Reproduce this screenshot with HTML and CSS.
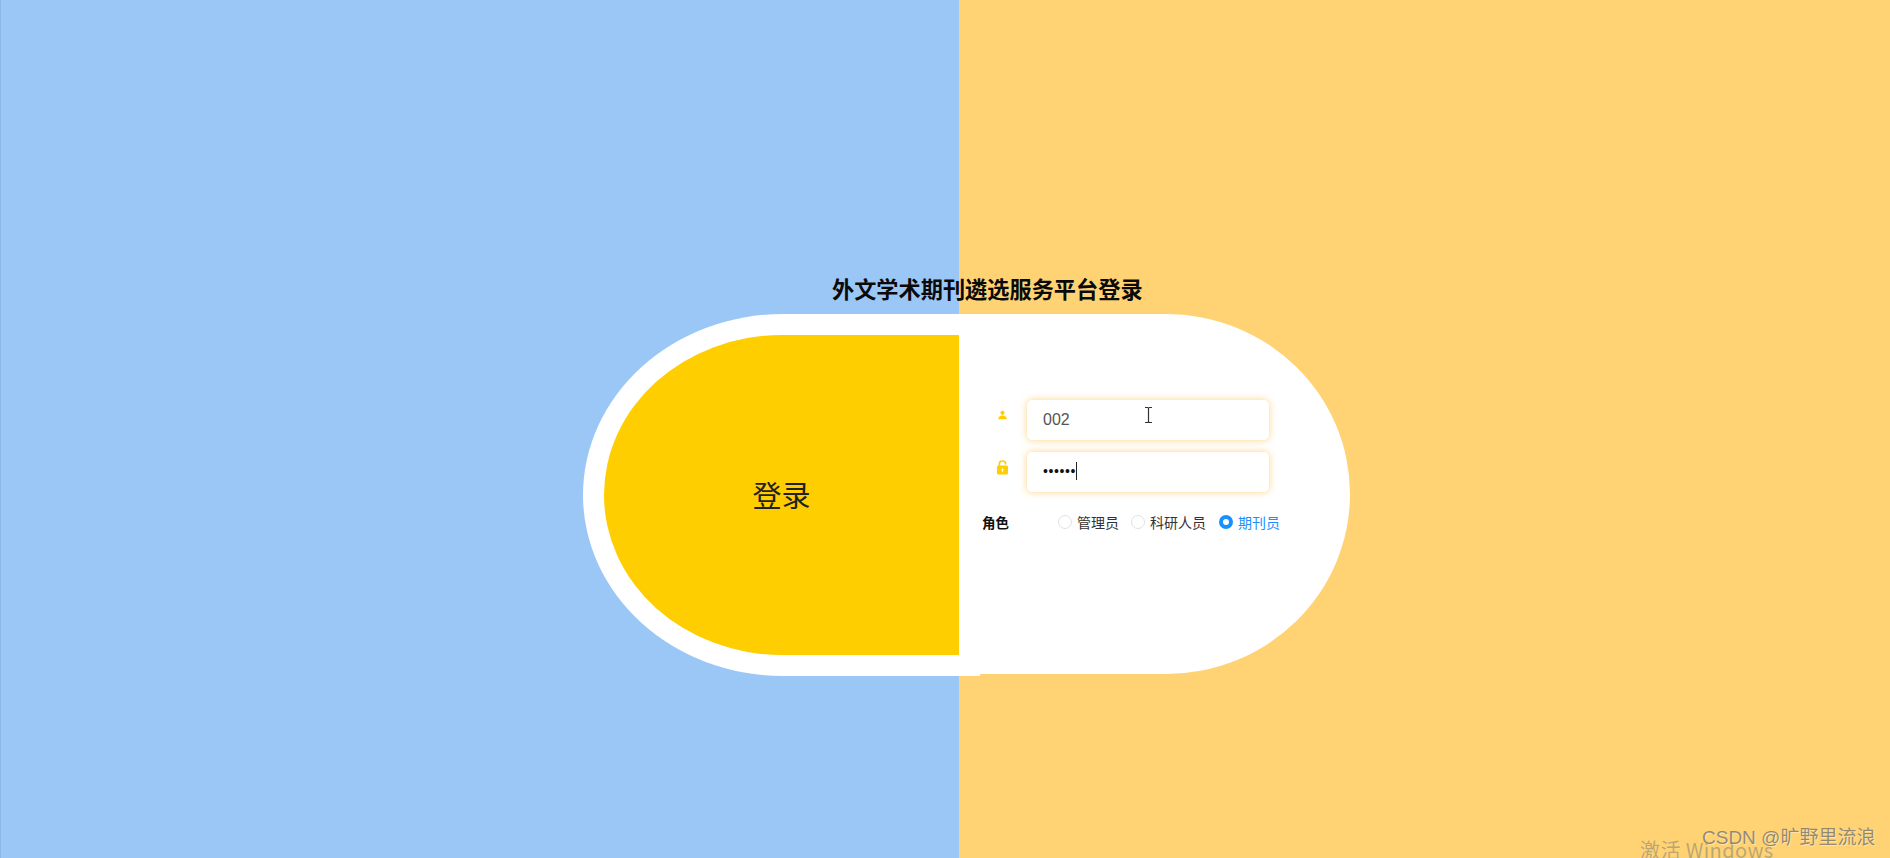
FILE: index.html
```html
<!DOCTYPE html>
<html lang="zh-CN">
<head>
<meta charset="utf-8">
<title>外文学术期刊遴选服务平台登录</title>
<link rel="stylesheet" href="styles.css">
</head>
<body>
<main class="stage">
  <h1 class="title">外文学术期刊遴选服务平台登录</h1>
  <div class="capsule">
    <section class="capsule-left">
      <div class="tab">登录</div>
    </section>
    <form class="capsule-right">
      <div class="field">
        <span class="field-icon">
          <svg class="icon-user" viewBox="0 0 10 10" aria-hidden="true"><circle cx="5" cy="2.6" r="2.3"/><path d="M0.3 9.6C0.3 6.9 2 5.6 5 5.6S9.7 6.9 9.7 9.6Z"/></svg>
        </span>
        <div class="box">
          <span class="value">002</span>
          <svg class="ibeam" viewBox="0 0 9 17" aria-hidden="true"><path d="M1 1H3.5C4 1 4.5 1.4 4.5 2V15C4.5 15.6 4 16 3.5 16H1M8 1H5.5C5 1 4.5 1.4 4.5 2M4.5 15C4.5 15.6 5 16 5.5 16H8"/></svg>
        </div>
      </div>
      <div class="field">
        <span class="field-icon">
          <svg class="icon-lock" viewBox="0 0 11 15" aria-hidden="true"><path class="shackle" d="M2.4 6V3.6C2.4 1.9 3.7 1 5.5 1S8.6 1.9 8.6 3.6V4.4"/><path fill-rule="evenodd" d="M1.5 5.4H9.5C10.3 5.4 11 6 11 6.8V13C11 13.9 10.3 14.5 9.5 14.5H1.5C0.7 14.5 0 13.9 0 13V6.8C0 6 0.7 5.4 1.5 5.4ZM5.5 8.4A1.2 1.2 0 0 0 4.9 10.6V11.8H6.1V10.6A1.2 1.2 0 0 0 5.5 8.4Z"/></svg>
        </span>
        <div class="box">
          <span class="value value-dots">••••••</span><span class="caret"></span>
        </div>
      </div>
      <div class="role">
        <span class="role-label">角色</span>
        <div class="radio"><span class="dot"></span>管理员</div>
        <div class="radio"><span class="dot"></span>科研人员</div>
        <div class="radio radio-on"><span class="dot"></span>期刊员</div>
      </div>
    </form>
  </div>
</main>
<div class="win-mark">激活 Windows</div>
<div class="csdn-mark">CSDN @旷野里流浪</div>
</body>
</html>
```
FILE: styles.css
```css
* { box-sizing: border-box; }
html, body { margin: 0; height: 858px; overflow: hidden; }
body {
  position: relative;
  font-family: "Noto Sans CJK SC", "Liberation Sans", sans-serif;
  background: linear-gradient(90deg, #9bc7f7 959px, #ffd373 959px);
  border-left: 1px solid #8db8e6;
}
.stage {
  display: flex;
  flex-direction: column;
  align-items: flex-start;
  padding: 273px 0 0 582px;
}
.title {
  margin: 0 0 11px 249px;
  font-size: 22.2px;
  line-height: 30px;
  font-weight: 700;
  color: #0a0a0a;
  white-space: nowrap;
}
.capsule { display: flex; align-items: flex-start; }
.capsule-left {
  width: 397px;
  height: 362px;
  padding: 21px;
  background: #fff;
  border-radius: 200px 0 0 200px / 181px 0 0 181px;
}
.tab {
  height: 320px;
  padding-bottom: 3px;
  display: flex;
  align-items: center;
  justify-content: center;
  background: #ffce00;
  border-radius: 178px 0 0 178px / 160px 0 0 160px;
  font-size: 29px;
  color: #222;
}
.capsule-right {
  width: 391px;
  height: 360px;
  margin-left: -21px;
  padding: 86px 0 0 21px;
  background: #fff;
  border-radius: 0 184px 184px 0 / 0 180px 180px 0;
}
.field { display: flex; align-items: flex-start; margin-bottom: 12px; }
.field-icon {
  width: 47px;
  padding-right: 3px;
  height: 40px;
  display: flex;
  justify-content: center;
}
.icon-user { width: 9px; height: 10px; margin-top: 10px; fill: #ffce00; }
.icon-lock { width: 11px; height: 15px; margin-top: 8px; fill: #ffce00; }
.icon-lock .shackle { fill: none; stroke: #ffce00; stroke-width: 1.6; }
.box {
  position: relative;
  width: 242px;
  height: 40px;
  padding-left: 16px;
  display: flex;
  align-items: center;
  background: #fff;
  border-radius: 5px;
  box-shadow: 0 0 7px rgba(255, 180, 40, .6);
}
.value {
  font-family: "Liberation Sans", sans-serif;
  font-size: 16px;
  color: #555;
}
.value-dots { color: #111; font-size: 14px; letter-spacing: .6px; margin-top: -3px; }
.caret {
  width: 1px;
  height: 18px;
  margin-top: -2px;
  background: #222;
}
.ibeam {
  position: absolute;
  left: 117px;
  top: 6px;
  width: 9px;
  height: 18px;
  fill: none;
  stroke: #333;
  stroke-width: 1.2;
}
.role {
  display: flex;
  align-items: center;
  height: 20px;
  margin-top: 20px;
  padding-left: 2px;
  font-size: 14px;
  line-height: 20px;
  color: #333;
}
.role-label {
  width: 76px;
  font-size: 13.5px;
  font-weight: 700;
  color: #111;
}
.radio {
  display: flex;
  align-items: center;
  margin-right: 12px;
  white-space: nowrap;
}
.radio + .radio + .radio { margin-left: 1px; }
.dot {
  width: 14px;
  height: 14px;
  margin-right: 5px;
  border: 1px solid #e2e2e2;
  border-radius: 50%;
  background: #fff;
}
.radio-on { color: #1890ff; margin-right: 0; }
.radio-on .dot {
  border: 4px solid #1890ff;
}
.win-mark {
  position: absolute;
  left: 1639px;
  top: 836px;
  font-family: "Noto Sans CJK SC", "Liberation Sans", sans-serif;
  font-size: 20px;
  line-height: 28px;
  letter-spacing: .4px;
  color: rgba(120, 120, 120, .5);
  white-space: nowrap;
}
.csdn-mark {
  position: absolute;
  left: 1701px;
  top: 826px;
  font-family: "Liberation Sans", "Noto Sans CJK SC", sans-serif;
  font-size: 19px;
  line-height: 24px;
  color: rgba(110, 110, 110, .75);
  text-shadow: 1px 1px 0 rgba(255, 255, 255, .4);
  white-space: nowrap;
}
```
